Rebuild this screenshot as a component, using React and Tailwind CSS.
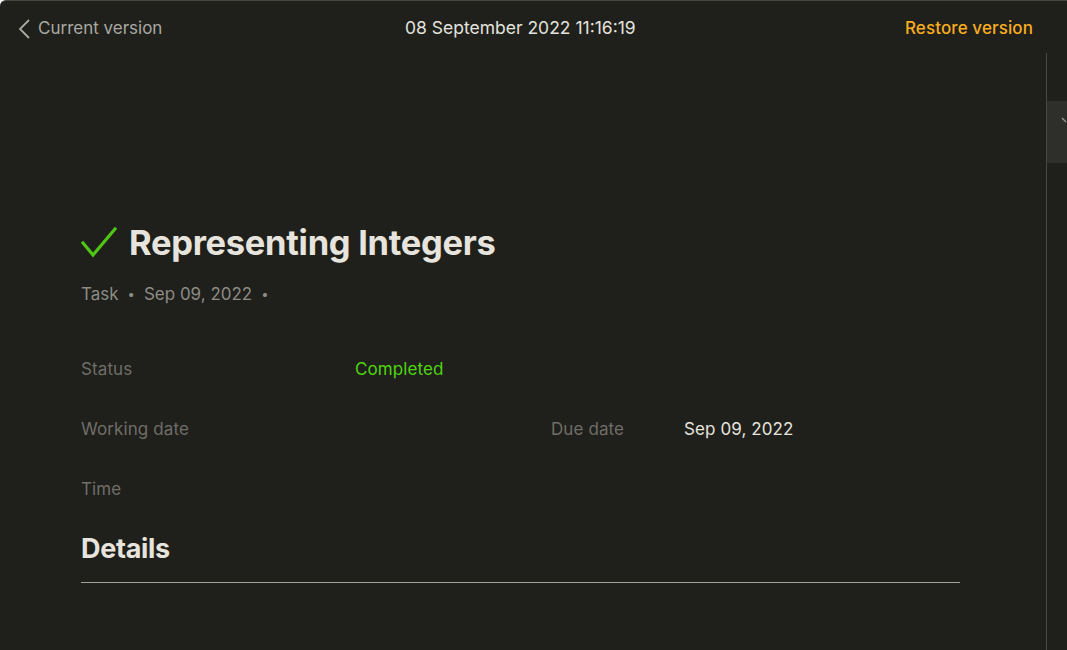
import React from "react";

// Version history view of a single task page
const Check = () => (
  <svg width="36" height="32" viewBox="0 0 36 32" fill="none" className="shrink-0">
    <polyline points="2,16 12,28 34,2" stroke="#4fc613" strokeWidth="3.2" strokeLinecap="square" strokeLinejoin="miter" />
  </svg>
);

const Row = ({ children }) => (
  <div className="flex items-center h-[60px] text-[17px] tracking-[0.1px]">{children}</div>
);

export default function App() {
  return (
    <div className="h-[650px] w-[1067px] overflow-hidden bg-[#1f1f1c] font-['Inter',sans-serif] flex flex-col border-t border-[#46463f] rounded-tl-[6px]">
      {/* header */}
      <div className="flex items-center h-[52px] pt-[3px] shrink-0 text-[17px]">
        <div className="w-[405px] flex items-center pl-[16px] text-[#a9a9a1]">
          <svg width="20" height="22" viewBox="0 0 20 22" fill="none" className="mr-[2px]">
            <polyline points="13,2 4,11 13,20" stroke="#a9a9a1" strokeWidth="1.8" />
          </svg>
          <span>Current version</span>
        </div>
        <div className="text-[#e4e3dd] text-[17.5px]">08 September 2022 11:16:19</div>
        <div className="flex-1 flex justify-end pr-[34px] text-[#f8ad1f] font-medium tracking-[0.1px]">Restore version</div>
      </div>

      <div className="flex flex-1">
        {/* main content */}
        <div className="flex-1 pl-[81px] pt-[170px]">
          <div className="w-[879px]">
            <div className="flex items-center gap-[12px] h-[40px]">
              <Check />
              <h1 className="text-[34.5px] font-bold text-[#e6e4dc] tracking-[-0.3px]">Representing Integers</h1>
            </div>
            <div className="flex items-center gap-[9px] mt-[19px] text-[17px] text-[#8d8c85]">
              <span>Task</span>
              <span className="text-[13px]">•</span>
              <span>Sep 09, 2022</span>
              <span className="text-[13px]">•</span>
            </div>
            <div className="mt-[32px]">
              <Row>
                <span className="w-[274px] text-[#6f6e67]">Status</span>
                <span className="text-[#4fd40d]">Completed</span>
              </Row>
              <Row>
                <span className="w-[470px] text-[#6f6e67]">Working date</span>
                <span className="w-[133px] text-[#6f6e67]">Due date</span>
                <span className="text-[#e6e4dc]">Sep 09, 2022</span>
              </Row>
              <Row>
                <span className="text-[#6f6e67]">Time</span>
              </Row>
            </div>
            <div className="h-[60px] flex items-center">
              <h2 className="text-[27px] font-bold text-[#e6e4dc] tracking-[-0.3px]">Details</h2>
            </div>
            <div className="border-b border-[#a3a29a] mt-[2px]" />
          </div>
        </div>

        {/* right rail */}
        <div className="w-[21px] border-l border-[#4a4a44] pt-[48px]">
          <div className="h-[62px] bg-[#2e2e2b] flex items-start justify-end pt-[16px]">
            <svg width="6" height="8" viewBox="0 0 6 8" fill="none">
              <polyline points="1,1 5,5" stroke="#9a9a92" strokeWidth="1.3" />
            </svg>
          </div>
        </div>
      </div>
    </div>
  );
}
